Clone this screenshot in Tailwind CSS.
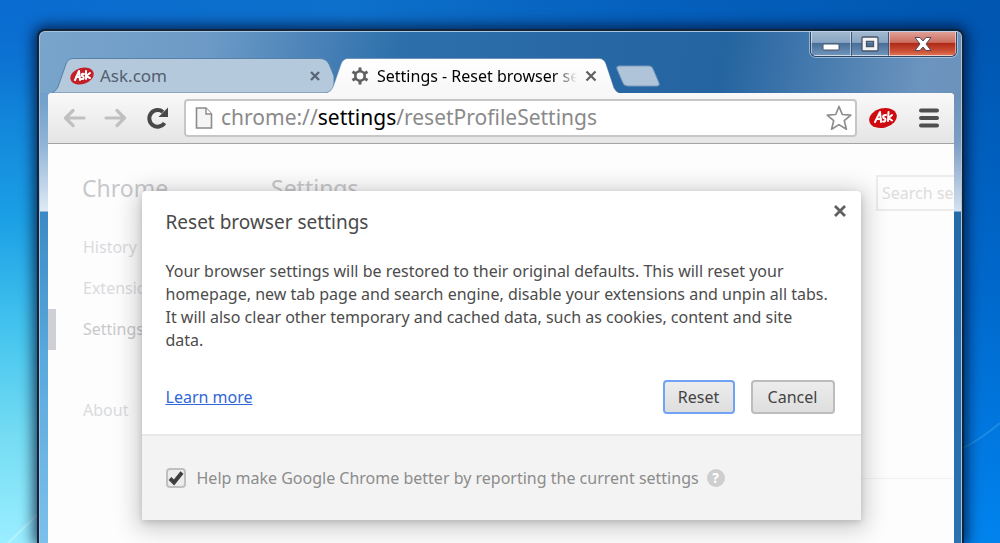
<!DOCTYPE html>
<html lang="en">
<head>
    <meta charset="UTF-8">
    <meta name="viewport" content="width=device-width, initial-scale=1.0">
    <title>Settings - Reset browser settings</title>
    <script src="https://cdn.jsdelivr.net/npm/@tailwindcss/browser@4"></script>
</head>
<body class="relative h-screen overflow-hidden bg-[linear-gradient(to_right,#0a6cd0_0%,#0d70cb_35%,#0560bd_65%,#0056b0_100%)] font-['Noto_Sans','Open_Sans',sans-serif]">
    <!-- Desktop wallpaper -->
    <svg class="absolute inset-0 w-full h-full" viewBox="0 0 1000 543" preserveAspectRatio="none" aria-hidden="true">
        <defs>
            <linearGradient id="wallLeft" x1="0" y1="0" x2="0" y2="1">
                <stop offset="0" stop-color="#0a6cd0" stop-opacity="0"/>
                <stop offset="0.2" stop-color="#1183d9"/>
                <stop offset="0.4" stop-color="#1b9fe5"/>
                <stop offset="0.6" stop-color="#42c3ee"/>
                <stop offset="0.8" stop-color="#74dcf3"/>
                <stop offset="1" stop-color="#9aeeff"/>
            </linearGradient>
            <linearGradient id="wallRight" x1="0" y1="0" x2="0" y2="1">
                <stop offset="0" stop-color="#0056b0"/>
                <stop offset="0.5" stop-color="#0068cb"/>
                <stop offset="1" stop-color="#0183ee"/>
            </linearGradient>
        </defs>
        <rect width="60" height="543" fill="url(#wallLeft)"/>
        <rect x="940" y="29" width="60" height="514" fill="url(#wallRight)"/>
        <path d="M958 451 Q980 440 1000 423" fill="none" stroke="#2d9ae8" stroke-width="2" opacity="0.6"/>
        <path d="M8 543 L38 514" stroke="#c9f6ff" stroke-width="2" opacity="0.6"/>
    </svg>

    <!-- Browser window -->
    <div class="relative h-full pt-[29px] pl-[37px] pr-[36px]">
        <div class="flex flex-col h-full rounded-t-lg border-2 border-b-0 border-[#10243c] shadow-[0_0_14px_3px_rgba(0,15,50,0.8)] bg-[#10243c]">
            <div class="flex flex-col flex-1 min-h-0 rounded-t-md border border-b-0 border-[#a9c4dc] bg-[linear-gradient(100deg,#79a5cc_0%,#6c9ac6_17%,#2d6fab_36%,#2464a0_68%,#6c94be_88%,#6c90b8_100%)]">
                <!-- Title bar -->
                <div class="flex justify-between h-[61px] pl-3 pr-1">
                    <div class="flex items-end">
                        <div class="relative flex items-center w-[282px] h-[35px] pl-[18px] pr-[13px]">
                            <svg class="absolute inset-0 w-full h-full" viewBox="0 0 282 35" preserveAspectRatio="none" aria-hidden="true">
                                <path d="M0 35 Q4 33 6 29 L14 6 Q16 .5 21 .5 H268 Q274 .5 277 6 L282 18 V35 Z" fill="#b5c9dd" stroke="#5881aa"/>
                            </svg>
                            <svg class="relative shrink-0 w-6 h-5" viewBox="0 0 24 20" role="img" aria-label="Ask">
                                <ellipse cx="12" cy="10" rx="12" ry="8" fill="#c4202a" transform="rotate(-17 12 10)"/>
                                <path d="M5 14 L9 5 L10 14 M6 11 H10 M14 8 Q11 7 12 10 Q15 11 13 13 H11 M16 5 V13 M20 7 L16 10 L20 12" fill="none" stroke="#fff" stroke-width="2" stroke-linecap="round" stroke-linejoin="round"/>
                            </svg>
                            <span class="relative flex-1 pl-1.5 text-[17px] text-[#52606f]">Ask.com</span>
                            <button class="relative" aria-label="Close tab">
                                <svg class="w-3 h-3" viewBox="0 0 12 12"><path d="M2 2 L10 10 M10 2 L2 10" stroke="#586879" stroke-width="2.4"/></svg>
                            </button>
                        </div>
                        <div class="relative flex items-center w-[293px] h-[35px] -ml-2 pl-[25px] pr-[22px]">
                            <svg class="absolute inset-0 w-full h-full" viewBox="0 0 293 35" preserveAspectRatio="none" aria-hidden="true">
                                <defs>
                                    <linearGradient id="tabFill" x1="0" y1="0" x2="0" y2="1">
                                        <stop offset="0" stop-color="#ffffff"/>
                                        <stop offset="1" stop-color="#f7f7f7"/>
                                    </linearGradient>
                                </defs>
                                <path d="M0 35 Q5 34 7 29 L15 6 Q17 .5 22 .5 H273 Q278 .5 280 6 L288 30 Q290 34 293 35 Z" fill="url(#tabFill)"/>
                                <path d="M0 35 Q5 34 7 29 L15 6 Q17 .5 22 .5 H273 Q278 .5 280 6 L288 30 Q290 34 293 35" fill="none" stroke="#456f9a" stroke-opacity="0.5"/>
                            </svg>
                            <svg class="relative shrink-0 w-[18px] h-[18px]" viewBox="0 0 18 18" aria-hidden="true">
                                <circle cx="9" cy="9" r="4.7" fill="none" stroke="#5f5f5f" stroke-width="2.6"/>
                                <path d="M9 .5 V4 M9 14 V17.500 M1.500 4.700 L4.600 6.500 M13.400 11.500 L16.500 13.300 M1.500 13.300 L4.600 11.500 M13.400 6.500 L16.500 4.700" stroke="#5f5f5f" stroke-width="3"/>
                            </svg>
                            <span class="relative flex-1 ml-2 mr-2 overflow-hidden whitespace-nowrap text-base text-black [mask-image:linear-gradient(to_right,#000_88%,transparent)]">Settings - Reset browser settings</span>
                            <button class="relative" aria-label="Close tab">
                                <svg class="w-3 h-3" viewBox="0 0 12 12"><path d="M1.500 1.500 L10.500 10.500 M10.500 1.500 L1.500 10.500" stroke="#606060" stroke-width="2.2"/></svg>
                            </button>
                        </div>
                        <button class="-ml-1 mb-1.5" aria-label="New tab">
                            <svg class="w-[46px] h-[22px]" viewBox="0 0 46 22"><path d="M4 1 H34 Q37 1 38 4 L44 18 Q45 21 42 21 H13 Q9 21 8 18 L2 4 Q1 1 4 1 Z" fill="#afc4d9" stroke="#7798ba"/></svg>
                        </button>
                    </div>
                    <!-- Window controls -->
                    <div class="flex h-[25px] rounded-b-md border border-t-0 border-[#2e4766] shadow-[0_0_0_1px_rgba(200,220,240,0.6)] overflow-hidden">
                        <button class="flex items-center justify-center w-10 border border-t-0 border-white/50 bg-[linear-gradient(#a2b9d0_0%,#8aa6c3_45%,#486f98_50%,#6f94ba_100%)]" aria-label="Minimize">
                            <svg class="w-[18px] h-4" viewBox="0 0 18 16"><rect x="1" y="8" width="16" height="6" rx="1" fill="#fff" stroke="#475468"/></svg>
                        </button>
                        <button class="flex items-center justify-center w-[38px] border border-t-0 border-l-[#38577a] border-r-[#38577a] border-b-white/50 bg-[linear-gradient(#a2b9d0_0%,#8aa6c3_45%,#486f98_50%,#6f94ba_100%)]" aria-label="Maximize">
                            <svg class="w-[18px] h-4" viewBox="0 0 18 16"><path d="M2 1 H16 Q17 1 17 2 V14 Q17 15 16 15 H2 Q1 15 1 14 V2 Q1 1 2 1 Z M5.500 5.500 V10.500 H12.500 V5.500 Z" fill="#f4f4f4" fill-rule="evenodd" stroke="#475468" stroke-width="1.300"/></svg>
                        </button>
                        <button class="flex items-center justify-center w-[67px] border border-t-0 border-white/50 bg-[linear-gradient(#dfa096_0%,#cc6e60_45%,#b02b18_50%,#c84b32_80%,#dd7050_100%)]" aria-label="Close">
                            <svg class="w-[18px] h-4" viewBox="0 0 18 16"><path d="M1 1.500 H6 L9 5 L12 1.500 H17 L12 8 L17 14.500 H12 L9 11 L6 14.500 H1 L6 8 Z" fill="#fff" stroke="#56495a" stroke-linejoin="round"/></svg>
                        </button>
                    </div>
                </div>

                <div class="flex flex-1 min-h-0">
                    <div class="w-2 bg-[linear-gradient(#6f9fcb_0px,#8eb3d6_50px,#dfeaf5_118px,#3b8ac6_119px,#58a8dc_260px,#7cc0ec_450px)]"></div>

                    <div class="flex flex-col flex-1 min-w-0 rounded-t overflow-hidden bg-white">
                        <!-- Toolbar -->
                        <div class="flex items-center h-[51px] pl-[15px] pr-[15px] border-b border-[#a3a3a3] bg-[linear-gradient(#f9f9f9,#e5e5e5)]">
                            <button aria-label="Back">
                                <svg class="w-[23px] h-5" viewBox="0 0 23 20"><path d="M10 2.500 L2.500 10 L10 17.500 M3 10 H21" fill="none" stroke="#c0c0c0" stroke-width="3.200" stroke-linecap="round" stroke-linejoin="round"/></svg>
                            </button>
                            <button class="ml-[18px]" aria-label="Forward">
                                <svg class="w-[23px] h-5" viewBox="0 0 23 20"><path d="M13 2.500 L20.500 10 L13 17.500 M20 10 H2" fill="none" stroke="#c0c0c0" stroke-width="3.200" stroke-linecap="round" stroke-linejoin="round"/></svg>
                            </button>
                            <button class="ml-[18px]" aria-label="Reload">
                                <svg class="w-6 h-6" viewBox="0 0 24 24"><path d="M19.500 17 A8.300 8.300 0 1 1 18 6" fill="none" stroke="#484848" stroke-width="4"/><path d="M23 1.500 V11 H13.500 Z" fill="#484848"/></svg>
                            </button>
                            <div class="flex items-center flex-1 min-w-0 h-[38px] ml-[15px] px-[9px] rounded border-2 border-[#c6c6c6] bg-white">
                                <svg class="shrink-0 w-[18px] h-[22px]" viewBox="0 0 18 22" aria-hidden="true"><path d="M1.500 1 H11 L16.500 7 V21 H1.500 Z" fill="#f5f5f5" stroke="#8b8b8b" stroke-width="1.600"/><path d="M11 1 V7 H16.500" fill="#fff" stroke="#8b8b8b" stroke-width="1.400"/></svg>
                                <div class="flex-1 ml-2 whitespace-nowrap text-[21px] text-[#8a8a8a]" role="textbox" aria-label="Address" contenteditable="true">chrome://<span class="text-black">settings</span>/resetProfileSettings</div>
                                <button class="-mr-1.5" aria-label="Bookmark this page">
                                    <svg class="w-[26px] h-[26px]" viewBox="0 0 26 26"><path d="M13 1.500 L16.300 9.500 L24.800 10.200 L18.300 15.700 L20.400 24.200 L13 19.600 L5.600 24.200 L7.700 15.700 L1.200 10.200 L9.700 9.500 Z" fill="#fff" stroke="#8d8d8d" stroke-width="1.700" stroke-linejoin="round"/></svg>
                                </button>
                            </div>
                            <button class="ml-3" aria-label="Ask">
                                <svg class="w-7 h-6" viewBox="0 0 28 24">
                                    <ellipse cx="14" cy="12" rx="14" ry="9.800" fill="#cf0a10" transform="rotate(-14 14 12)"/>
                                    <path d="M6 16 L11 6 L12 16 M8 13 H12 M17 9 Q13 9 14.500 12 Q18 13 15.500 15.500 H14 M19.500 6 L19 15 M23 9 L19.500 12 L23 14.500" fill="none" stroke="#fff" stroke-width="2" stroke-linecap="round" stroke-linejoin="round"/>
                                </svg>
                            </button>
                            <button class="ml-[22px]" aria-label="Menu">
                                <svg class="w-5 h-5" viewBox="0 0 20 20"><path d="M2 2.500 H18 M2 10 H18 M2 17.500 H18" stroke="#4e4e4e" stroke-width="4" stroke-linecap="round"/></svg>
                            </button>
                        </div>

                        <!-- Page -->
                        <div class="relative flex-1 min-h-0 overflow-hidden bg-[#fdfdfd]">
                            <div class="flex pt-[29px] whitespace-nowrap">
                                <nav class="w-[223px] text-base">
                                    <h1 class="pl-[34px] text-[23px] leading-[30px] text-[#c8c8cc]">Chrome</h1>
                                    <a href="#" class="block mt-6 pl-[35px] leading-[41px] text-[#dadadd]">History</a>
                                    <a href="#" class="block pl-[35px] leading-[41px] text-[#dadadd]">Extensions</a>
                                    <a href="#" class="block pl-[27px] border-l-8 border-[#cfcfd6] leading-[41px] text-[#c9c9cc]">Settings</a>
                                    <a href="#" class="block mt-10 pl-[35px] leading-[41px] text-[#dadadd]">About</a>
                                </nav>
                                <div class="flex-1">
                                    <div class="flex justify-between">
                                        <h2 class="text-[23px] leading-[30px] text-[#c8c8cc]">Settings</h2>
                                        <input type="text" aria-label="Search settings" placeholder="Search settings" class="w-[200px] h-9 mt-0.5 -mr-[122px] px-1 border-2 border-[#ececec] text-base placeholder:text-[#dcdcdc]">
                                    </div>
                                    <div class="mt-[267px] border-t border-[#f2f2f2]"></div>
                                </div>
                            </div>

                            <!-- Reset dialog -->
                            <div class="absolute inset-0 flex items-start justify-center pt-[47px]">
                                <div role="dialog" aria-labelledby="dialogTitle" class="w-[719px] rounded-t bg-white shadow-[0_4px_23px_5px_rgba(0,0,0,0.2),0_2px_6px_rgba(0,0,0,0.15)]">
                                    <div class="pl-6 pr-[26px] pt-[13px] pb-5">
                                        <div class="flex items-start justify-between">
                                            <h2 id="dialogTitle" class="pt-1 text-[19px] leading-7 text-[#4a4a4a]">Reset browser settings</h2>
                                            <button class="-mr-3" aria-label="Close">
                                                <svg class="w-[14px] h-[14px]" viewBox="0 0 14 14"><path d="M2 2 L12 12 M12 2 L2 12" stroke="#606060" stroke-width="2.800"/></svg>
                                            </button>
                                        </div>
                                        <p class="mt-6 pr-1 text-base leading-[23px] text-[#4c4c4c]">Your browser settings will be restored to their original defaults. This will reset your homepage, new tab page and search engine, disable your extensions and unpin all tabs. It will also clear other temporary and cached data, such as cookies, content and site data.</p>
                                        <div class="flex items-center mt-7 text-base">
                                            <a href="#" class="flex-1 text-[#2f67d8] underline">Learn more</a>
                                            <button class="w-[72px] h-[34px] mr-4 rounded-sm border-2 border-[#70a2f5] bg-[linear-gradient(#ededed,#dedede)] text-[#444]">Reset</button>
                                            <button class="w-[84px] h-[34px] rounded-sm border-2 border-[#bcbcbc] bg-[linear-gradient(#ededed,#dedede)] text-[#444]">Cancel</button>
                                        </div>
                                    </div>
                                    <div class="flex items-center h-[86px] px-6 border-t-2 border-[#e8e8e8] bg-[#f3f3f3] text-base text-[#8c8c8c]">
                                        <div class="relative w-5 h-5">
                                            <input id="report" type="checkbox" checked class="block appearance-none w-5 h-5 rounded-sm border-2 border-[#c0c0c0] bg-[#ececec]">
                                            <svg class="absolute inset-0 w-5 h-5 pointer-events-none" viewBox="0 0 20 20"><path d="M4 10.500 L8 14.500 L16 4.500" fill="none" stroke="#3f3f3f" stroke-width="4"/></svg>
                                        </div>
                                        <label for="report" class="ml-[11px]">Help make Google Chrome better by reporting the current settings</label>
                                        <a href="#" aria-label="Help" class="flex items-center justify-center w-[18px] h-[18px] ml-2 rounded-full bg-[#cecece] text-sm leading-none font-bold text-white">?</a>
                                    </div>
                                </div>
                            </div>
                        </div>
                    </div>

                    <div class="w-[7px] bg-[linear-gradient(#6c90b8_0px,#7c9ec4_50px,#d5e2f0_118px,#236aa9_119px,#2a72b2_450px)]"></div>
                </div>
            </div>
        </div>
    </div>
</body>
</html>
